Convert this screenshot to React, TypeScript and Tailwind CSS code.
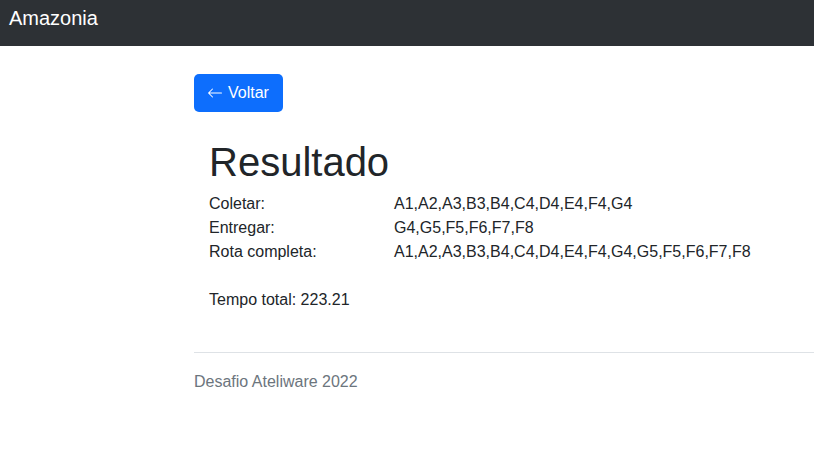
import React from 'react';

const rows: [string, string][] = [
  ['Coletar:', 'A1,A2,A3,B3,B4,C4,D4,E4,F4,G4'],
  ['Entregar:', 'G4,G5,F5,F6,F7,F8'],
  ['Rota completa:', 'A1,A2,A3,B3,B4,C4,D4,E4,F4,G4,G5,F5,F6,F7,F8'],
];

const ArrowLeft = () => (
  <svg width="16" height="16" viewBox="0 0 16 16" fill="currentColor">
    <path
      fillRule="evenodd"
      d="M15 8a.5.5 0 0 0-.5-.5H2.707l3.147-3.146a.5.5 0 1 0-.708-.708l-4 4a.5.5 0 0 0 0 .708l4 4a.5.5 0 0 0 .708-.708L2.707 8.5H14.5A.5.5 0 0 0 15 8z"
    />
  </svg>
);

const App: React.FC = () => {
  return (
    <div className="min-h-screen bg-white text-[#212529] font-['Liberation_Sans',Arial,sans-serif]">
      <nav className="h-[46px] bg-[#2d3135] flex items-center px-[9px]">
        <span className="text-white text-[20px] leading-none -mt-[10px]">Amazonia</span>
      </nav>
      <main className="ml-[194px] pt-[28px]">
        <button className="h-[38px] pl-[13px] pr-[14px] rounded-[5px] bg-[#0d6efd] text-white text-[16px] flex items-center gap-[5px]">
          <ArrowLeft />
          <span>Voltar</span>
        </button>
        <section className="pl-[15px] pt-[26px]">
          <h1 className="text-[40px] leading-[48px] font-medium mb-[6px]">Resultado</h1>
          <div className="text-[16px] leading-[24px]">
            {rows.map(([label, value]) => (
              <div key={label} className="flex">
                <span className="w-[185px] shrink-0">{label}</span>
                <span>{value}</span>
              </div>
            ))}
            <p className="mt-[24px]">Tempo total: 223.21</p>
          </div>
        </section>
        <hr className="mt-[40px] border-t border-[#dee2e6]" />
        <footer className="pt-[17px] text-[16px] leading-[24px] text-[#6c757d]">Desafio Ateliware 2022</footer>
      </main>
    </div>
  );
};

export default App;
